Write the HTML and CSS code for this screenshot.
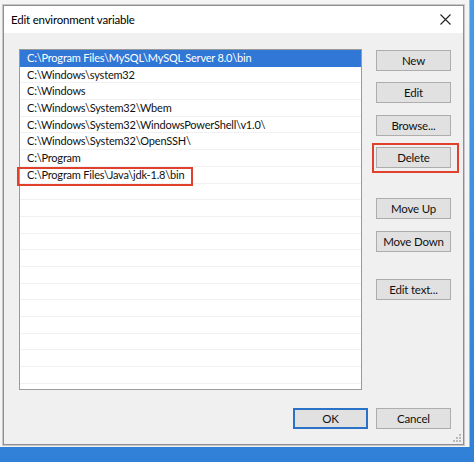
FILE: index.html
```html
<!DOCTYPE html>
<html lang="en">
  <head>
    <meta charset="UTF-8" />
    <meta name="viewport" content="width=device-width, initial-scale=1.0" />
    <title>Edit environment variable</title>
    <link rel="stylesheet" href="styles.css">
  </head>
  <body>
    <div class="desktop">
      <div class="back-window"></div>
      <div class="dialog">
        <div class="titlebar">
          <span class="title">Edit environment variable</span>
          <svg class="close" width="11" height="11" viewBox="0 0 11 11">
            <path d="M0.5 0.5 L10.5 10.5 M10.5 0.5 L0.5 10.5" stroke="#222" stroke-width="1.1" fill="none" />
          </svg>
        </div>
        <div class="dialog-body">
          <div class="main">
            <div class="list-wrap">
              <div class="listbox">
                <div class="row selected">C:\Program Files\MySQL\MySQL Server 8.0\bin</div>
                <div class="row">C:\Windows\system32</div>
                <div class="row">C:\Windows</div>
                <div class="row">C:\Windows\System32\Wbem</div>
                <div class="row">C:\Windows\System32\WindowsPowerShell\v1.0\</div>
                <div class="row">C:\Windows\System32\OpenSSH\</div>
                <div class="row">C:\Program</div>
                <div class="row">C:\Program Files\Java\jdk-1.8\bin</div>
                <div class="row"></div>
                <div class="row"></div>
                <div class="row"></div>
                <div class="row"></div>
                <div class="row"></div>
                <div class="row"></div>
                <div class="row"></div>
                <div class="row"></div>
                <div class="row"></div>
                <div class="row"></div>
                <div class="row"></div>
                <div class="row"></div>
                <div class="row"></div>
              </div>
              <div class="mark mark-row"></div>
            </div>
            <div class="buttons">
              <button class="btn">New</button>
              <button class="btn btn-edit">Edit</button>
              <button class="btn btn-browse">Browse...</button>
              <button class="btn btn-delete">Delete</button>
              <button class="btn btn-up">Move Up</button>
              <button class="btn btn-down">Move Down</button>
              <button class="btn btn-text">Edit text...</button>
              <div class="mark mark-delete"></div>
            </div>
          </div>
          <div class="footer">
            <button class="btn btn-default">OK</button>
            <button class="btn">Cancel</button>
          </div>
          <svg class="grip" width="9" height="9" viewBox="0 0 9 9">
            <rect x="7" y="1" width="2" height="2" fill="#bbb" />
            <rect x="4" y="4" width="2" height="2" fill="#bbb" />
            <rect x="7" y="4" width="2" height="2" fill="#bbb" />
            <rect x="1" y="7" width="2" height="2" fill="#bbb" />
            <rect x="4" y="7" width="2" height="2" fill="#bbb" />
            <rect x="7" y="7" width="2" height="2" fill="#bbb" />
          </svg>
        </div>
      </div>
    </div>
  </body>
</html>
```

FILE: styles.css
```css
body {
  margin: 0;
  font-family: Lato, "Noto Sans", sans-serif;
  font-size: 11px;
  letter-spacing: -0.2px;
  color: #111;
}
.desktop {
  position: relative;
  width: 474px;
  height: 462px;
  overflow: hidden;
  background: linear-gradient(#4a9be6, #2f80d6);
}
.back-window {
  position: absolute;
  left: 0;
  top: 0;
  width: 469px;
  height: 447px;
  background-color: #f4f4f4;
  border-right: 1px solid #b5b5b5;
}
.dialog {
  position: absolute;
  left: 3px;
  top: 5px;
  width: 461px;
  height: 440px;
  box-sizing: border-box;
  border: 1px solid #8f8f8f;
  box-shadow: 0 0 0 1px #c8c8c8;
  background-color: #f0f0f0;
  display: flex;
  flex-direction: column;
}
.titlebar {
  height: 27px;
  background-color: #fff;
  display: flex;
  align-items: center;
  justify-content: space-between;
  padding: 0 12px 0 7px;
}
.title {
  font-size: 11.5px;
  color: #000;
}
.close {
  display: block;
}
.dialog-body {
  position: relative;
  flex: 1;
  padding: 16px 12px 0 15px;
}
.main {
  display: flex;
  gap: 14px;
}
.list-wrap {
  position: relative;
}
.listbox {
  width: 343px;
  height: 341px;
  box-sizing: border-box;
  border: 1px solid #9a9a9a;
  background-color: #fff;
  overflow: hidden;
}
.row {
  height: 16.7px;
  box-sizing: border-box;
  padding-left: 7px;
  line-height: 16px;
  border-bottom: 1px solid #f1f1f1;
  white-space: nowrap;
}
.row.selected {
  background-color: #3177d6;
  border-bottom-color: #3177d6;
  color: #fff;
}
.mark {
  position: absolute;
  box-sizing: border-box;
  border: 2px solid #e0402c;
}
.mark-row {
  left: -2px;
  top: 118px;
  width: 176px;
  height: 19px;
}
.buttons {
  position: relative;
  display: flex;
  flex-direction: column;
  padding-top: 1px;
}
.btn {
  width: 75px;
  height: 21px;
  padding: 0;
  font-family: inherit;
  font-size: 11.5px;
  letter-spacing: -0.2px;
  color: #111;
  background-color: #e1e1e1;
  border: 1px solid #adadad;
}
.btn-edit {
  margin-top: 11px;
}
.btn-browse {
  margin-top: 12px;
}
.btn-delete {
  margin-top: 11px;
}
.btn-up {
  margin-top: 30px;
}
.btn-down {
  margin-top: 12px;
}
.btn-text {
  margin-top: 27px;
}
.mark-delete {
  left: -4px;
  top: 94px;
  width: 87px;
  height: 30px;
}
.footer {
  display: flex;
  justify-content: flex-end;
  gap: 8px;
  margin-top: 18px;
}
.btn-default {
  border-color: #2a72c8;
  box-shadow: inset 0 0 0 1px #2a72c8;
}
.grip {
  position: absolute;
  right: 2px;
  bottom: 2px;
}
```
